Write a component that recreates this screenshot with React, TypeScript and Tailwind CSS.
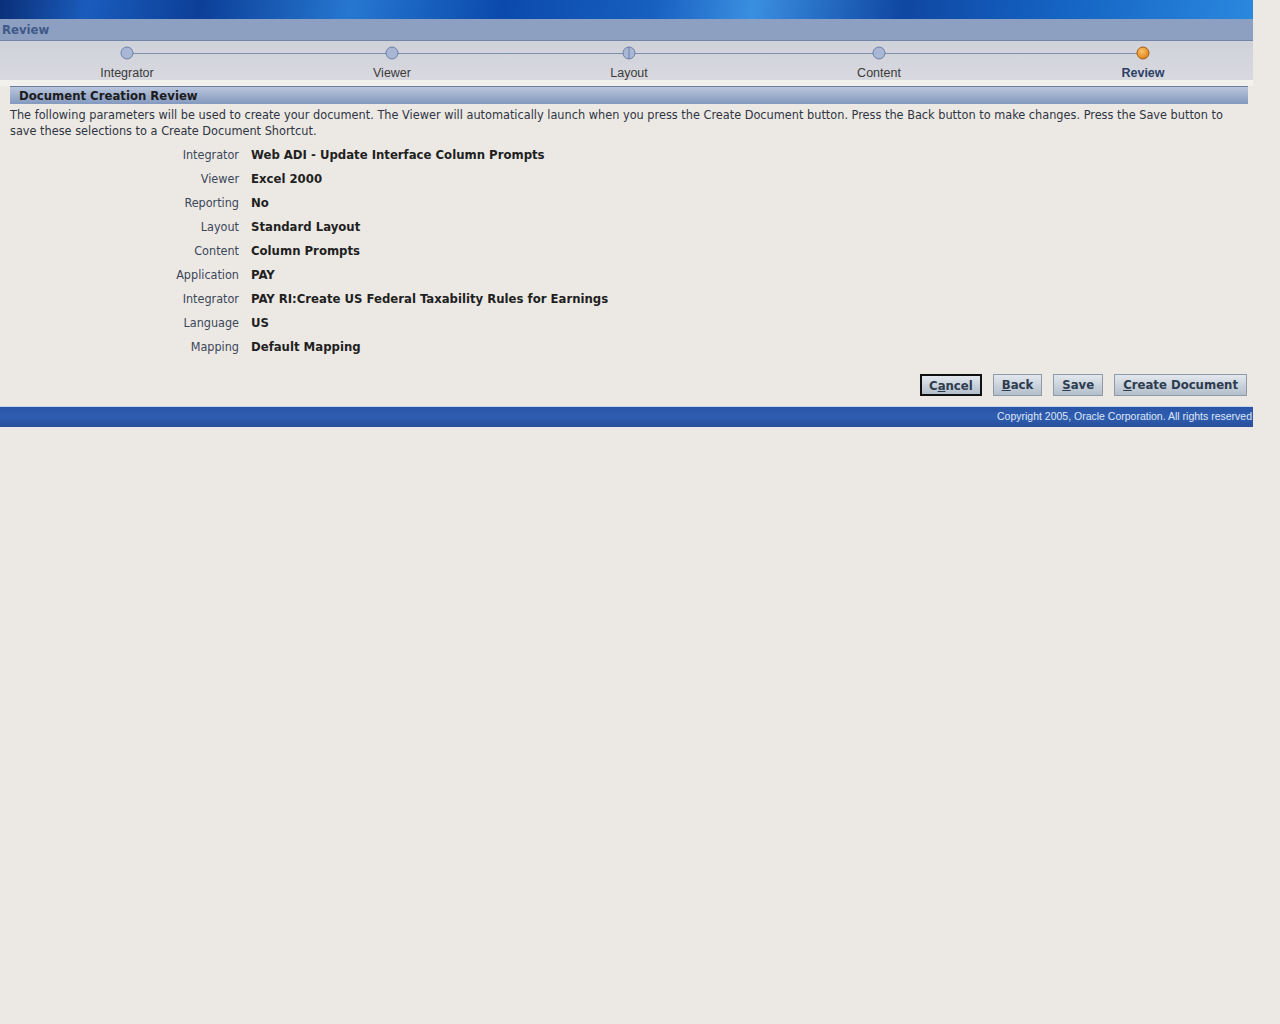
import type { ReactNode } from 'react'

const tahoma = { fontFamily: '"DejaVu Sans Condensed", "DejaVu Sans", sans-serif' }
const arial = { fontFamily: '"Liberation Sans", Arial, sans-serif' }

type Step = { label: string; state: 'done' | 'partial' | 'current'; offset: string }

const steps: Step[] = [
  { label: 'Integrator', state: 'done', offset: 'ml-[67px]' },
  { label: 'Viewer', state: 'done', offset: 'ml-[145px]' },
  { label: 'Layout', state: 'partial', offset: 'ml-[117px]' },
  { label: 'Content', state: 'done', offset: 'ml-[130px]' },
  { label: 'Review', state: 'current', offset: 'ml-[144px]' },
]

const params: [string, string][] = [
  ['Integrator', 'Web ADI - Update Interface Column Prompts'],
  ['Viewer', 'Excel 2000'],
  ['Reporting', 'No'],
  ['Layout', 'Standard Layout'],
  ['Content', 'Column Prompts'],
  ['Application', 'PAY'],
  ['Integrator', 'PAY RI:Create US Federal Taxability Rules for Earnings'],
  ['Language', 'US'],
  ['Mapping', 'Default Mapping'],
]

function StepDot({ state }: { state: Step['state'] }) {
  if (state === 'current') {
    return (
      <svg width="14" height="14" viewBox="0 0 14 14">
        <defs>
          <radialGradient id="orange" cx="0.4" cy="0.35" r="0.7">
            <stop offset="0" stopColor="#fbc46a" />
            <stop offset="1" stopColor="#dc7d14" />
          </radialGradient>
        </defs>
        <circle cx="7" cy="7" r="6" fill="url(#orange)" stroke="#a85c0c" strokeWidth="1" />
      </svg>
    )
  }
  return (
    <svg width="14" height="14" viewBox="0 0 14 14">
      <circle cx="7" cy="7" r="6" fill="#a9b7d6" stroke="#6e80a6" strokeWidth="1" />
      {state === 'partial' ? <line x1="7" y1="1" x2="7" y2="13" stroke="#6e80a6" strokeWidth="1" /> : null}
    </svg>
  )
}

function Btn({ children, focused }: { children: ReactNode; focused?: boolean }) {
  return (
    <button
      type="button"
      className={`h-[22px] bg-gradient-to-b from-[#e3e8ee] to-[#b3bfcb] text-[13px] font-bold text-[#2e3c4f] ${
        focused ? 'border-2 border-[#111] px-[7px]' : 'border border-[#8e9aa8] px-[8px]'
      }`}
      style={tahoma}
    >
      {children}
    </button>
  )
}

export default function App() {
  return (
    <div className="min-h-screen w-full bg-[#ece9e4]">
      <div className="w-[1253px]">
        <div className="h-[19px] bg-[linear-gradient(100deg,#0a2f78_0%,#1a5cbc_7%,#0c3f98_16%,#2677d0_28%,#0b4aac_40%,#175fc0_52%,#3a8fe0_60%,#0f47a2_72%,#1462c2_84%,#2a88de_100%)]" />

        <div className="flex h-[22px] items-center border-b border-[#7486a8] bg-[#8ea0c2] pl-[2px]">
          <span className="text-[13px] font-bold text-[#405987]" style={tahoma}>
            Review
          </span>
        </div>

        <div className="relative h-[39px] bg-gradient-to-b from-[#d0d2da] to-[#d8d9df]">
          <div className="absolute left-[127px] top-[12px] h-px w-[1016px] bg-[#7f8fae]" />
          <div className="relative flex">
            {steps.map((step) => (
              <div key={step.label} className={`${step.offset} flex w-[120px] flex-col items-center pt-[5px]`}>
                <StepDot state={step.state} />
                <span
                  className={`mt-[6px] text-[12.5px] leading-[14px] ${
                    step.state === 'current' ? 'font-bold text-[#2d4066]' : 'text-[#3a3a3a]'
                  }`}
                  style={arial}
                >
                  {step.label}
                </span>
              </div>
            ))}
          </div>
        </div>

        <div className="h-[6px] bg-[#f2f1ee]" />

        <div className="ml-[10px] flex h-[18px] w-[1238px] items-center border-t border-[#6c7d9e] bg-gradient-to-b from-[#b9c6dc] to-[#8499bf] pl-[9px]">
          <span className="text-[13px] font-bold text-[#1c1c1c]" style={tahoma}>
            Document Creation Review
          </span>
        </div>

        <p className="pl-[10px] pr-[20px] pt-[3px] text-[12.6px] leading-[16px] text-[#2f3442]" style={tahoma}>
          The following parameters will be used to create your document. The Viewer will automatically launch when you press the
          Create Document button. Press the Back button to make changes. Press the Save button to save these selections to a
          Create Document Shortcut.
        </p>

        <div className="mt-[4px] flex flex-col">
          {params.map(([label, value], i) => (
            <div key={i} className="flex h-[24px] items-center">
              <span className="w-[239px] text-right text-[12.5px] text-[#3b4659]" style={tahoma}>
                {label}
              </span>
              <span className="ml-[12px] text-[13px] font-bold text-[#1f1f1f]" style={tahoma}>
                {value}
              </span>
            </div>
          ))}
        </div>

        <div className="mt-[15px] flex justify-end gap-[11px] pr-[6px]">
          <Btn focused>
            C<span className="underline">a</span>ncel
          </Btn>
          <Btn>
            <span className="underline">B</span>ack
          </Btn>
          <Btn>
            <span className="underline">S</span>ave
          </Btn>
          <Btn>
            <span className="underline">C</span>reate Document
          </Btn>
        </div>

        <div className="mt-[10px] border-t border-[#c8d6ee] bg-gradient-to-b from-[#2a55a6] via-[#2f5db0] to-[#284f9c]">
          <div className="flex h-[20px] items-center justify-end pr-[1px]">
            <span className="text-[10.5px] text-[#dfe7f6]" style={arial}>
              Copyright 2005, Oracle Corporation. All rights reserved
            </span>
          </div>
        </div>
      </div>
    </div>
  )
}
